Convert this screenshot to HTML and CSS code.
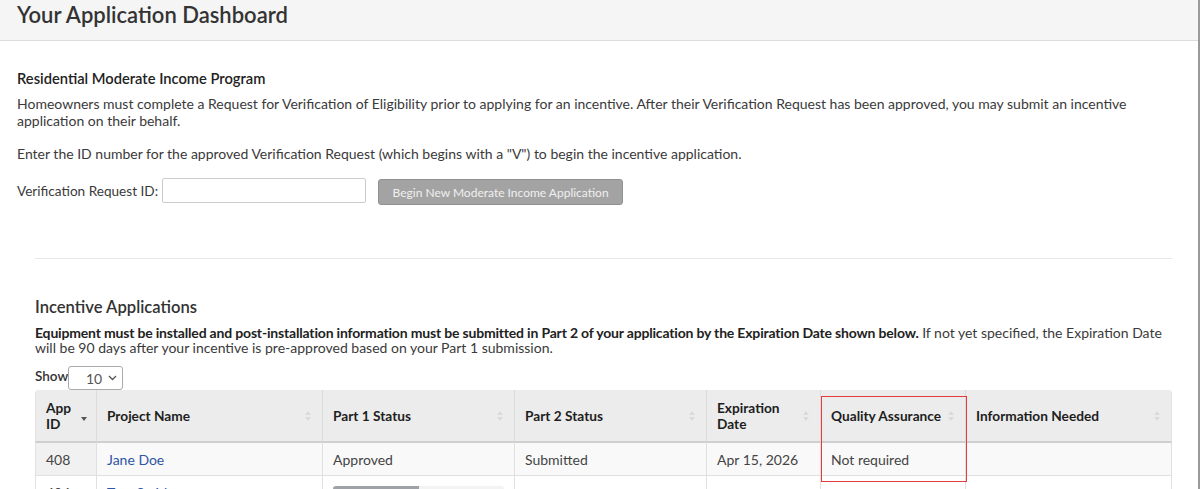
FILE: index.html
```html
<!DOCTYPE html>
<html lang="en">
<head>
  <meta charset="UTF-8" />
  <meta name="viewport" content="width=device-width, initial-scale=1.0"/>
  <title>Your Application Dashboard</title>
  <link rel="stylesheet" href="styles.css">
</head>
<body>
  <div class="page">
    <div class="page-header">
      <h1>Your Application Dashboard</h1>
    </div>

    <div class="content">
      <!-- Moderate income program -->
      <div class="program">
        <h2>Residential Moderate Income Program</h2>
        <p>Homeowners must complete a Request for Verification of Eligibility prior to applying for an incentive. After their Verification Request has been approved, you may submit an incentive application on their behalf.</p>
        <p>Enter the ID number for the approved Verification Request (which begins with a "V") to begin the incentive application.</p>
        <div class="verify-form">
          <label for="vid">Verification Request ID:</label>
          <input id="vid" type="text" />
          <button class="btn-disabled" disabled>Begin New Moderate Income Application</button>
        </div>
      </div>

      <div class="applications">
        <hr />
        <h3>Incentive Applications</h3>
        <p class="note"><strong>Equipment must be installed and post-installation information must be submitted in Part 2 of your application by the Expiration Date shown below.</strong> If not yet specified, the Expiration Date will be 90 days after your incentive is pre-approved based on your Part 1 submission.</p>

        <div class="show-row">
          <span>Show</span>
          <div class="select">10
            <svg width="9" height="6" viewBox="0 0 9 6"><path d="M1 1l3.5 3.5L8 1" fill="none" stroke="#555" stroke-width="1.3"/></svg>
          </div>
        </div>

        <div class="table-wrap">
          <table class="apps">
            <thead>
              <tr>
                <th class="col-id sorted">App ID<span class="sort desc"></span></th>
                <th class="col-name">Project Name<span class="sort"></span></th>
                <th class="col-p1">Part 1 Status<span class="sort"></span></th>
                <th class="col-p2">Part 2 Status<span class="sort"></span></th>
                <th class="col-exp">Expiration Date<span class="sort"></span></th>
                <th class="col-qa">Quality Assurance<span class="sort"></span></th>
                <th class="col-info">Information Needed<span class="sort"></span></th>
              </tr>
            </thead>
            <tbody>
              <tr class="odd">
                <td class="sorted">408</td>
                <td><a href="#">Jane Doe</a></td>
                <td>Approved</td>
                <td>Submitted</td>
                <td>Apr 15, 2026</td>
                <td>Not required</td>
                <td></td>
              </tr>
              <tr>
                <td class="sorted">404</td>
                <td><a href="#">Tom Smith</a></td>
                <td>
                  <div class="progress"><div class="progress-bar" style="width: 50%">50%</div></div>
                </td>
                <td></td>
                <td></td>
                <td></td>
                <td></td>
              </tr>
            </tbody>
          </table>
          <div class="highlight"></div>
        </div>
      </div>
    </div>
  </div>
</body>
</html>
```

FILE: styles.css
```css
body {
  margin: 0;
  font-family: Lato, "Open Sans", sans-serif;
  font-size: 14px;
  color: #3a3a3a;
  background: #fff;
}

.page {
  border-right: 2px solid #9a9a9a;
  min-height: 489px;
  box-sizing: border-box;
}

.page-header {
  height: 40px;
  background: #f5f5f5;
  border-bottom: 1px solid #dcdcdc;
  padding: 0 17px;
}

.page-header h1 {
  margin: 0;
  font-size: 22px;
  font-weight: 600;
  line-height: 30px;
  color: #333;
}

.content {
  padding: 0 26px 0 17px;
}

/* Program block */
.program h2 {
  margin: 27px 0 7px;
  font-size: 14.7px;
  font-weight: 600;
  line-height: 20px;
  color: #222;
}

.program p {
  margin: 0 0 16px;
  line-height: 17px;
}

.verify-form {
  display: flex;
  align-items: flex-start;
  margin-top: 9px;
}

.verify-form label {
  margin: 5px 4px 0 0;
  font-size: 13.6px;
}

.verify-form input {
  width: 204px;
  height: 25px;
  box-sizing: border-box;
  border: 1px solid #ccc;
  border-radius: 2px;
  margin: 0 12px 0 0;
}

.btn-disabled {
  width: 245px;
  height: 26px;
  margin-top: 1px;
  background: #a3a3a3;
  border: 1px solid #919191;
  border-radius: 3px;
  color: #f0f0f0;
  font-family: inherit;
  font-size: 12px;
}

/* Applications block */
.applications {
  padding-left: 18px;
}

.applications hr {
  border: none;
  border-top: 1px solid #e8e8e8;
  margin: 53px 0 0;
}

.applications h3 {
  margin: 38px 0 8px;
  font-size: 16.6px;
  font-weight: 600;
  line-height: 20px;
  color: #333;
}

.note {
  margin: 0;
  line-height: 15px;
}

.note strong {
  color: #222;
  letter-spacing: -0.18px;
}

.show-row {
  display: flex;
  align-items: flex-start;
  margin-top: 11px;
  height: 24px;
}

.show-row span {
  font-weight: 600;
  font-size: 13.5px;
  margin-top: 2px;
  color: #333;
}

.select {
  width: 55px;
  height: 24px;
  box-sizing: border-box;
  border: 1px solid #aaa;
  border-radius: 3px;
  display: flex;
  align-items: center;
  justify-content: flex-end;
  gap: 6px;
  padding-right: 5px;
  color: #555;
}

/* Table */
.table-wrap {
  position: relative;
}

.apps {
  width: 100%;
  border-collapse: separate;
  border-spacing: 0;
  table-layout: fixed;
}

.apps th,
.apps td {
  box-sizing: border-box;
}

.apps th {
  position: relative;
  height: 53px;
  padding: 0 22px 0 10px;
  background: #ececec;
  border-right: 1px solid #dcdcdc;
  border-bottom: 2px solid #cfcfcf;
  text-align: left;
  font-weight: 700;
  font-size: 13.7px;
  line-height: 16px;
  color: #1e1e1e;
}

.apps th:first-child {
  border-top-left-radius: 4px;
  border-left: 1px solid #e2e2e2;
}

.apps th:last-child {
  border-top-right-radius: 4px;
  border-right: 1px solid #e2e2e2;
}

.col-id { width: 62px; }
.col-name { width: 226px; }
.col-p1 { width: 192px; }
.col-p2 { width: 192px; }
.col-exp { width: 114px; }
.col-qa { width: 145px; }

.apps th.col-id {
  padding-right: 20px;
}

.apps td {
  height: 33px;
  padding: 0 10px;
  border-right: 1px solid #e0e0e0;
  border-bottom: 1px solid #e0e0e0;
  color: #444;
}

.apps td:first-child {
  border-left: 1px solid #e2e2e2;
}

.apps tr.odd td {
  background: #f9f9f9;
}

.apps tr.odd td.sorted {
  background: #f1f1f1;
}

.apps a {
  color: #2f55a4;
  text-decoration: none;
}

/* Sort arrows */
.sort {
  position: absolute;
  right: 11px;
  top: 50%;
  margin-top: -7px;
  width: 6px;
  height: 14px;
}

.sort::before,
.sort::after {
  content: "";
  position: absolute;
  left: 0;
  border-left: 3px solid transparent;
  border-right: 3px solid transparent;
}

.sort::before {
  top: 2px;
  border-bottom: 4px solid #dadada;
}

.sort::after {
  bottom: 2px;
  border-top: 4px solid #dadada;
}

.sort.desc {
  right: 9px;
}

.sort.desc::before {
  border-bottom-color: transparent;
}

.sort.desc::after {
  border-top-color: #555;
}

/* Progress bar */
.progress {
  height: 18px;
  margin-top: 6px;
  background: #f3f3f3;
  border-radius: 3px;
  overflow: hidden;
}

.progress-bar {
  height: 100%;
  background: #9fa2a6;
  color: #fff;
  font-size: 11px;
  line-height: 18px;
  text-align: center;
}

/* Annotation box round the QA column */
.highlight {
  position: absolute;
  left: 786px;
  top: 6px;
  width: 144px;
  height: 84px;
  border: 1px solid #e43c3c;
}
```
